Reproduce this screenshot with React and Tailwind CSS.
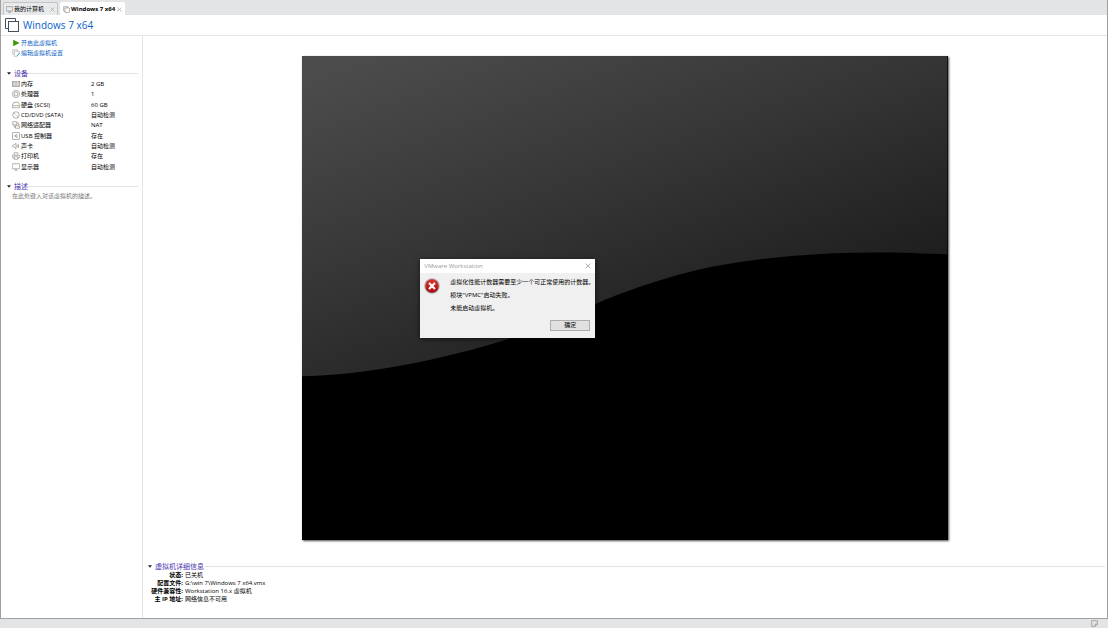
import React from 'react';

const devices = [
  { name: '内存', value: '2 GB', icon: 'memory' },
  { name: '处理器', value: '1', icon: 'cpu' },
  { name: '硬盘 (SCSI)', value: '60 GB', icon: 'disk' },
  { name: 'CD/DVD (SATA)', value: '自动检测', icon: 'cd' },
  { name: '网络适配器', value: 'NAT', icon: 'network' },
  { name: 'USB 控制器', value: '存在', icon: 'usb' },
  { name: '声卡', value: '自动检测', icon: 'sound' },
  { name: '打印机', value: '存在', icon: 'printer' },
  { name: '显示器', value: '自动检测', icon: 'display' },
];

const details = [
  { label: '状态:', value: '已关机' },
  { label: '配置文件:', value: 'G:\\win 7\\Windows 7 x64.vmx' },
  { label: '硬件兼容性:', value: 'Workstation 16.x 虚拟机' },
  { label: '主 IP 地址:', value: '网络信息不可用' },
];

const shapes = {
  memory: (
    <>
      <rect x="0.5" y="2.5" width="15" height="10" />
      <path d="M3.5 4v5M6.5 4v5M9.5 4v5M12.5 4v5M1 10.5h14" />
    </>
  ),
  cpu: (
    <>
      <path d="M4 1.5h8L14.5 4v8L12 14.5H4L1.5 12V4z" />
      <rect x="4.5" y="4.5" width="7" height="7" rx="1" />
    </>
  ),
  disk: (
    <>
      <path d="M3.5 2.5h9l3 7v4H.5v-4z" />
      <path d="M1 9.5h14" />
    </>
  ),
  cd: (
    <>
      <circle cx="8" cy="8" r="6.5" />
      <path d="M3.5 3.5L7 7M9 9l3.5 3.5" />
    </>
  ),
  network: (
    <>
      <path d="M1.5 1.5h8v6h-8z" />
      <path d="M7 9.5h8v5H7zM4 8v4h3M10 4h3v5" />
    </>
  ),
  usb: (
    <>
      <rect x="1.5" y="1.5" width="13" height="13" />
      <path d="M4 8h8M6 8l2-3h2M7 8l2 3h2" />
    </>
  ),
  sound: (
    <>
      <path d="M1.5 6v4H4l4 3.5v-11L4 6z" />
      <path d="M10.5 5.5v5M13 4v8" />
    </>
  ),
  printer: (
    <>
      <path d="M4.5 6V1.5h7V6M4.5 12h-3L1 6.5h14l-.5 5.5h-3" />
      <path d="M4.5 9.5h7v5h-7z" />
    </>
  ),
  display: (
    <>
      <rect x="0.5" y="1.5" width="15" height="10" rx="1" />
      <path d="M5 14.5h6M8 12v2" />
    </>
  ),
  vm: (
    <>
      <path d="M4 11.5H1.5v-10h10V4" />
      <rect x="4.5" y="4.5" width="10" height="10" />
    </>
  ),
};

function Icon({ name, className }) {
  return (
    <svg viewBox="0 0 16 16" fill="none" stroke="currentColor" className={className} aria-hidden="true">
      {shapes[name]}
    </svg>
  );
}

function CloseIcon({ className }) {
  return (
    <svg viewBox="0 0 10 10" fill="none" stroke="currentColor" className={className} aria-hidden="true">
      <path d="M1 1l8 8M9 1L1 9" strokeWidth="1.3" />
    </svg>
  );
}

function Tab({ icon, label, active }) {
  return (
    <div
      className={`flex items-center gap-[2px] rounded-t-xs border border-b-0 px-[2px] ${
        active ? 'border-white bg-white font-bold' : 'border-[#c4c5c7] bg-[#e9eaec]'
      }`}
    >
      <button className="flex items-center gap-px whitespace-nowrap">
        <Icon name={icon} className="size-[7px] text-[#555]" />
        {label}
      </button>
      <button aria-label="关闭" className={active ? '' : 'ml-[4px]'}>
        <CloseIcon className="size-[5px] text-[#999]" />
      </button>
    </div>
  );
}

function SectionTitle({ children }) {
  return (
    <div className="flex h-[9px] items-center">
      <button className="flex items-center gap-[3px] text-[7px] leading-[9px] text-[#4a35b0]">
        <svg viewBox="0 0 10 6" className="h-[3px] w-1" aria-hidden="true">
          <path d="M0 0h10L5 6z" fill="#222" />
        </svg>
        {children}
      </button>
      <div className="h-px flex-1 bg-[#e4e4e4]"></div>
    </div>
  );
}

function Sidebar() {
  return (
    <aside className="w-[142px] shrink-0 border-r border-[#e4e4e4] pr-1 pl-[6px]">
      <div className="flex flex-col items-start pt-[2px] pl-[5px] text-[#0a62c4]">
        <button className="flex h-[10px] items-center gap-px">
          <svg viewBox="0 0 10 10" className="size-2" aria-hidden="true">
            <path d="M1.5 1l8 4-8 4z" fill="#3a9a0c" />
          </svg>
          开启此虚拟机
        </button>
        <button className="flex h-[10px] items-center gap-px">
          <svg viewBox="0 0 16 16" fill="none" className="size-2" aria-hidden="true">
            <path d="M3.5 10.5h-2v-9h9v2M4.5 4.5h10v5l-5 5h-5z" stroke="#8a8f94" />
            <path d="M9 14l5.5-6 1 1-5.5 6z" fill="#18a5c4" />
          </svg>
          编辑虚拟机设置
        </button>
      </div>

      <div className="mt-[11px]">
        <SectionTitle>设备</SectionTitle>
      </div>
      <table className="mt-px ml-[5px] h-[93px] border-collapse">
        <tbody>
          {devices.map((d) => (
            <tr key={d.name}>
              <td className="w-[79px] p-0">
                <div className="flex items-center gap-px whitespace-nowrap">
                  <Icon name={d.icon} className="size-2 text-[#666]" />
                  {d.name}
                </div>
              </td>
              <td className="p-0 whitespace-nowrap">{d.value}</td>
            </tr>
          ))}
        </tbody>
      </table>

      <div className="mt-[10px]">
        <SectionTitle>描述</SectionTitle>
      </div>
      <p className="mt-px pl-[5px] text-[#777]">在此处键入对该虚拟机的描述。</p>
    </aside>
  );
}

function ErrorDialog() {
  return (
    <div
      role="dialog"
      aria-labelledby="dialog-title"
      className="absolute top-[203px] left-[118px] w-[175px] bg-[#f0f0f0] shadow-[0_1px_5px_rgba(0,0,0,0.6)]"
    >
      <div className="flex h-[14px] items-center justify-between bg-white px-1 text-[#999]">
        <h2 id="dialog-title">VMware Workstation</h2>
        <button aria-label="关闭">
          <CloseIcon className="size-[6px]" />
        </button>
      </div>
      <div className="flex gap-[10px] px-1 pt-[5px]">
        <svg viewBox="0 0 30 30" className="size-4 shrink-0" aria-hidden="true">
          <defs>
            <linearGradient id="err" x1="0" y1="0" x2="0" y2="1">
              <stop offset="0" stopColor="#d8382e" />
              <stop offset="1" stopColor="#a80a0a" />
            </linearGradient>
          </defs>
          <circle cx="15" cy="15" r="14.5" fill="#a9adad" />
          <circle cx="15" cy="15" r="12.5" fill="url(#err)" />
          <path d="M9.5 9.5l11 11M20.5 9.5l-11 11" stroke="#fff" strokeWidth="4" />
        </svg>
        <div className="flex flex-col gap-[5px] whitespace-nowrap">
          <p>虚拟化性能计数器需要至少一个可正常使用的计数器。</p>
          <p>模块"VPMC"启动失败。</p>
          <p>未能启动虚拟机。</p>
        </div>
      </div>
      <div className="flex justify-end px-[5px] pt-2 pb-[7px]">
        <button className="h-[11px] w-10 border border-[#adadad] bg-[#e1e1e1] leading-[9px]">确定</button>
      </div>
    </div>
  );
}

function Screen() {
  return (
    <div className="relative aspect-[4/3] h-full bg-black shadow-[1px_1px_2px_rgba(0,0,0,0.7)]">
      <svg viewBox="0 0 646 485" preserveAspectRatio="none" className="block size-full" aria-hidden="true">
        <defs>
          <linearGradient id="sheen" gradientUnits="userSpaceOnUse" x1="10" y1="28" x2="150" y2="400">
            <stop offset="0" stopColor="#4b4b4b" />
            <stop offset="0.5" stopColor="#353535" />
            <stop offset="1" stopColor="#1c1c1c" />
          </linearGradient>
        </defs>
        <path
          d="M0 0H646V199C625 198 600 197 573 197C510 197 435 203 378 219C350 227 322 236 295 248C268 260 240 272 205 284C160 298 80 319 0 321Z"
          fill="url(#sheen)"
        />
      </svg>
      <ErrorDialog />
    </div>
  );
}

export default function App() {
  return (
    <div className="flex h-screen flex-col bg-[#e3e4e6] font-['Open_Sans','Noto_Sans_CJK_SC',sans-serif] text-[6px] leading-[8px] text-black">
      <div className="flex min-h-0 flex-1 flex-col border-x border-b border-[#a0a0a0]">
        <nav className="flex h-[15px] shrink-0 gap-[2px] pt-[2px] pl-[2px]">
          <Tab icon="display" label="我的计算机" />
          <Tab icon="vm" label="Windows 7 x64" active />
        </nav>

        <header className="flex h-[21px] shrink-0 items-center gap-[3px] border-b border-[#e4e4e4] bg-white pl-[3px]">
          <Icon name="vm" className="size-4 text-[#44505c]" />
          <h1 className="text-[10px] leading-[14px] text-[#0a5fc8]">Windows 7 x64</h1>
        </header>

        <div className="flex min-h-0 flex-1 bg-white">
          <Sidebar />
          <main className="flex min-w-0 flex-1 flex-col">
            <div className="flex min-h-0 flex-1 justify-center pt-5 pb-[22px]">
              <Screen />
            </div>
            <section className="pr-[2px] pb-[15px] pl-[5px]">
              <SectionTitle>虚拟机详细信息</SectionTitle>
              <dl className="grid grid-cols-[35px_1fr] gap-x-[2px]">
                {details.map((d) => (
                  <React.Fragment key={d.label}>
                    <dt className="flex justify-end font-bold whitespace-nowrap">{d.label}</dt>
                    <dd>{d.value}</dd>
                  </React.Fragment>
                ))}
              </dl>
            </section>
          </main>
        </div>
      </div>

      <footer className="flex h-[9px] shrink-0 items-center justify-end pr-[10px]">
        <svg viewBox="0 0 16 16" fill="none" stroke="#8a8a8a" strokeWidth="1.5" className="size-[7px]" aria-hidden="true">
          <path d="M1.5 1.5h13v8l-5 5h-8zM14 9.5H9.5V14" />
        </svg>
      </footer>
    </div>
  );
}
